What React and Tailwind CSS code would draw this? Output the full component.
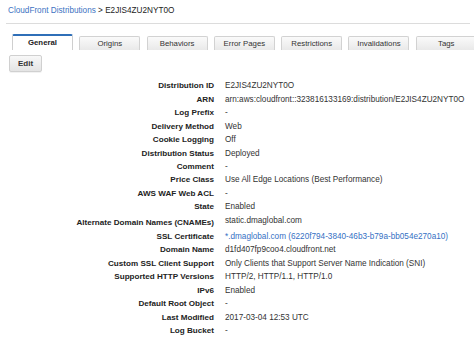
import React from 'react';

const tabs = ['General', 'Origins', 'Behaviors', 'Error Pages', 'Restrictions', 'Invalidations', 'Tags'];

const rows = [
    ['Distribution ID', 'E2JIS4ZU2NYT0O'],
    ['ARN', 'arn:aws:cloudfront::323816133169:distribution/E2JIS4ZU2NYT0O'],
    ['Log Prefix', '-'],
    ['Delivery Method', 'Web'],
    ['Cookie Logging', 'Off'],
    ['Distribution Status', 'Deployed'],
    ['Comment', '-'],
    ['Price Class', 'Use All Edge Locations (Best Performance)'],
    ['AWS WAF Web ACL', '-'],
    ['State', 'Enabled'],
    ['Alternate Domain Names (CNAMEs)', 'static.dmaglobal.com', 'tall'],
    ['SSL Certificate', '*.dmaglobal.com (6220f794-3840-46b3-b79a-bb054e270a10)', 'link'],
    ['Domain Name', 'd1fd407fp9coo4.cloudfront.net'],
    ['Custom SSL Client Support', 'Only Clients that Support Server Name Indication (SNI)'],
    ['Supported HTTP Versions', 'HTTP/2, HTTP/1.1, HTTP/1.0'],
    ['IPv6', 'Enabled'],
    ['Default Root Object', '-'],
    ['Last Modified', '2017-03-04 12:53 UTC'],
    ['Log Bucket', '-'],
];

export default function App() {
    return (
        <div className="w-[474px] h-[362px] bg-white overflow-hidden text-[#222]" style={{ fontFamily: '"Liberation Sans", Arial, sans-serif' }}>
            {/* Breadcrumb */}
            <div className="pt-[6px] h-[24px] text-[8.2px] leading-[10px] border-b border-[#dcdcdc] ml-[6px] pl-[2px] mr-[4px]">
                <span className="text-[#3d72c2]">CloudFront Distributions</span>
                <span> &gt; E2JIS4ZU2NYT0O</span>
            </div>

            {/* Tabs */}
            <div className="flex items-end gap-[6.3px] pl-[12px] h-[26px]">
                {tabs.map((t, i) => (
                    i === 0 ? (
                        <div key={t} className="w-[61px] h-[16px] shrink-0 bg-white border-t-2 border-t-[#2f6fb8] border-x border-x-[#cfcfcf] rounded-t-[2px] flex items-center justify-center text-[7.8px] font-bold">
                            {t}
                        </div>
                    ) : (
                        <div key={t} className="w-[61px] h-[14px] shrink-0 bg-gradient-to-b from-[#fafafa] to-[#e9e9e9] border border-b-0 border-[#d2d2d2] rounded-t-[2px] flex items-center justify-center text-[7.8px] text-[#333]">
                            {t}
                        </div>
                    )
                ))}
            </div>

            {/* Edit */}
            <div className="pl-[9px] pt-[5px]">
                <button className="w-[33px] h-[17px] bg-gradient-to-b from-[#f8f8f8] to-[#e4e4e4] border border-[#d0d0d0] rounded-[2px] text-[8px] font-bold text-[#333] flex items-center justify-center shadow-[0_1px_0_rgba(0,0,0,0.05)]">
                    Edit
                </button>
            </div>

            {/* Details */}
            <div className="pt-[7.3px] text-[8.1px] leading-[13.45px]">
                {rows.map(([label, value, kind]) => (
                    <div key={label} className="flex items-start">
                        <div className={`w-[214px] shrink-0 text-right font-bold text-[#222] ${kind === 'tall' ? 'pt-[2.5px]' : ''}`}>
                            {label}
                        </div>
                        <div className={`pl-[11px] whitespace-nowrap text-[8.2px] ${kind === 'link' ? 'text-[#3570c4]' : 'text-[#333]'}`}>
                            {value}
                        </div>
                    </div>
                ))}
            </div>
        </div>
    );
}
